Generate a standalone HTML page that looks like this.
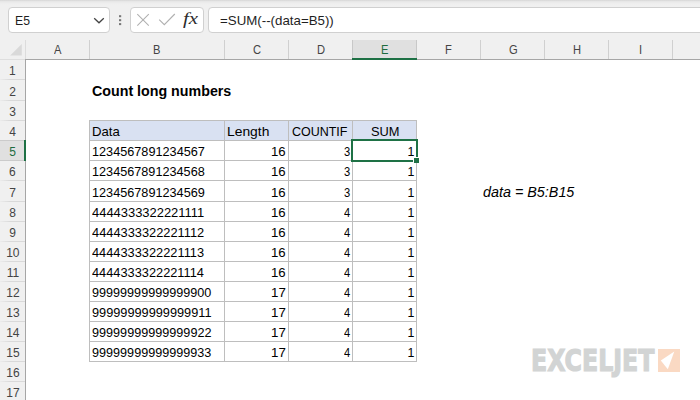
<!DOCTYPE html>
<html lang="en"><head><meta charset="utf-8"><title>Count long numbers</title>
<style>
html,body{margin:0;padding:0}
body{width:700px;height:400px;position:relative;overflow:hidden;background:#fff;font-family:"Liberation Sans", sans-serif}
.abs,.t,.chs,.rhs,.tl{position:absolute}
.t{white-space:pre;line-height:20px;transform-origin:0 0;display:block}
.f-sans{font-family:"Liberation Sans", sans-serif}
.f-serif{font-family:"Liberation Serif", serif}
.f-dejavu{font-family:"DejaVu Sans", "Liberation Sans", sans-serif;-webkit-text-stroke:1.2px #d2d4d4}
#top{left:0;top:0;width:700px;height:60px;background:#f0f0f0}
#topgrad{left:0;top:0;width:700px;height:5px;background:linear-gradient(#d6d6d6,#e7e7e7 30%,#eeeeee 65%,#f0f0f0)}
.box{background:#fff;border:1px solid #d0d0d0;border-radius:4px;box-sizing:border-box}
#namebox{left:8px;top:7px;width:102px;height:26px}
#fxbox{left:130px;top:7px;width:74px;height:26px}
#fbar{left:208px;top:7px;width:500px;height:26px}
#rowhdr{left:0;top:60px;width:25px;height:340px;background:#f0f0f0}
#rowline{left:25px;top:59px;width:1px;height:341px;background:#a6a6a6}
#hdrline{left:26px;top:59px;width:674px;height:1px;background:#a6a6a6}
#hdrline0{left:0;top:59px;width:25px;height:1px;background:#dedede}
#cornerline{left:25px;top:40px;width:1px;height:19px;background:#dcdcdc}
.chs{top:40px;width:1px;height:19px;background:#d0d0d0}
.rhs{left:0;width:25px;height:1px;background:linear-gradient(90deg,#ececec,#d9d9d9 40%)}
.rsel{background:#cbcbcb}
.csel{background:#c8c8c8}
#selcol{left:352px;top:40px;width:64px;height:18px;background:#e0e0e0}
#selcolb{left:352px;top:58px;width:65px;height:2px;background:#1e7145}
#selrow{left:0;top:141px;width:24px;height:19px;background:#e0e0e0}
#selrowb{left:24px;top:140px;width:2px;height:21px;background:#1e7145}
.tl{background:#bebebe}
#thead{left:90px;top:121px;width:326px;height:19px;background:#d9e1f2}
#sel{left:351px;top:139px;width:63px;height:19px;border:2px solid #1e7145}
#handle{left:413px;top:157px;width:5px;height:5px;background:#1e7145;border:1px solid #fff;border-bottom:0;border-right:0}
#logoicon{left:658px;top:349px;width:22px;height:23px;background:#fad9c3}
svg{position:absolute;overflow:visible}
</style></head><body>
<div id="top" class="abs"></div><div id="topgrad" class="abs"></div>
<div id="namebox" class="abs box"></div>
<div id="fxbox" class="abs box"></div>
<div id="fbar" class="abs box"></div>
<svg style="left:0;top:0" width="700" height="40" viewBox="0 0 700 40">
<polyline points="94.2,18.2 99,22.8 103.8,18.2" fill="none" stroke="#444" stroke-width="1.3"/>
<rect x="119" y="15.2" width="2.2" height="2" fill="#777"/><rect x="119" y="19.2" width="2.2" height="2" fill="#777"/><rect x="119" y="23.1" width="2.2" height="2" fill="#777"/>
<path d="M137.3 14.2 L148.8 25.6 M148.8 14.2 L137.3 25.6" stroke="#b0b0b0" stroke-width="1.1" fill="none"/>
<path d="M159.2 19.6 L164.3 24.6 L174.8 14" stroke="#b0b0b0" stroke-width="1.1" fill="none"/>
</svg>
<div id="selcol" class="abs"></div>
<div id="rowhdr" class="abs"></div>
<div id="selrow" class="abs"></div>
<div id="hdrline0" class="abs"></div><div id="hdrline" class="abs"></div><div id="cornerline" class="abs"></div>
<div id="rowline" class="abs"></div>
<svg style="left:0;top:40px" width="26" height="20" viewBox="0 40 26 20"><polygon points="21.8,44 21.8,55.6 10.2,55.6" fill="#d9d9d9"/></svg>
<div id="thead" class="abs"></div>
<div class="chs" style="left:89px"></div><div class="chs" style="left:224px"></div><div class="chs" style="left:288px"></div><div class="chs csel" style="left:352px"></div><div class="chs csel" style="left:416px"></div><div class="chs" style="left:480px"></div><div class="chs" style="left:544px"></div><div class="chs" style="left:608px"></div><div class="chs" style="left:672px"></div><div class="rhs" style="top:79px"></div><div class="rhs" style="top:100px"></div><div class="rhs" style="top:120px"></div><div class="rhs rsel" style="top:140px"></div><div class="rhs rsel" style="top:160px"></div><div class="rhs" style="top:180px"></div><div class="rhs" style="top:201px"></div><div class="rhs" style="top:221px"></div><div class="rhs" style="top:241px"></div><div class="rhs" style="top:261px"></div><div class="rhs" style="top:281px"></div><div class="rhs" style="top:301px"></div><div class="rhs" style="top:321px"></div><div class="rhs" style="top:341px"></div><div class="rhs" style="top:361px"></div><div class="rhs" style="top:381px"></div><div class="tl" style="left:89px;top:120px;width:328px;height:1px"></div><div class="tl" style="left:89px;top:140px;width:328px;height:1px"></div><div class="tl" style="left:89px;top:160px;width:328px;height:1px"></div><div class="tl" style="left:89px;top:180px;width:328px;height:1px"></div><div class="tl" style="left:89px;top:201px;width:328px;height:1px"></div><div class="tl" style="left:89px;top:221px;width:328px;height:1px"></div><div class="tl" style="left:89px;top:241px;width:328px;height:1px"></div><div class="tl" style="left:89px;top:261px;width:328px;height:1px"></div><div class="tl" style="left:89px;top:281px;width:328px;height:1px"></div><div class="tl" style="left:89px;top:301px;width:328px;height:1px"></div><div class="tl" style="left:89px;top:321px;width:328px;height:1px"></div><div class="tl" style="left:89px;top:341px;width:328px;height:1px"></div><div class="tl" style="left:89px;top:361px;width:328px;height:1px"></div><div class="tl" style="left:89px;top:120px;width:1px;height:242px"></div><div class="tl" style="left:224px;top:120px;width:1px;height:242px"></div><div class="tl" style="left:288px;top:120px;width:1px;height:242px"></div><div class="tl" style="left:352px;top:120px;width:1px;height:242px"></div><div class="tl" style="left:416px;top:120px;width:1px;height:242px"></div>
<div id="selcolb" class="abs"></div><div id="selrowb" class="abs"></div>
<div id="sel" class="abs"></div><div id="handle" class="abs"></div>
<div id="logoicon" class="abs"></div>
<svg style="left:0;top:0" width="700" height="400" viewBox="0 0 700 400"><polygon points="674.3,351.5 660.8,360.5 667.8,369.2" fill="#fff"/></svg>
<span class="t f-sans" style="left:14.53px;top:11.00px;font-size:12.6px;transform:scaleX(0.9709);color:#1f1f1f;">E5</span>
<span class="t f-sans" style="left:219.98px;top:11.00px;font-size:12.8px;transform:scaleX(1.0391);color:#1f1f1f;">=SUM(--(data=B5))</span>
<span class="t f-serif" style="left:183.40px;top:9.00px;font-size:17px;transform:scaleX(1.2253);color:#2b2b2b;font-style:italic;">fx</span>
<span class="t f-sans" style="left:54.08px;top:40.00px;font-size:12px;transform:scaleX(0.9300);color:#444;">A</span>
<span class="t f-sans" style="left:153.42px;top:40.00px;font-size:12px;transform:scaleX(0.9300);color:#444;">B</span>
<span class="t f-sans" style="left:252.68px;top:40.00px;font-size:12px;transform:scaleX(0.9300);color:#444;">C</span>
<span class="t f-sans" style="left:316.59px;top:40.00px;font-size:12px;transform:scaleX(0.9300);color:#444;">D</span>
<span class="t f-sans" style="left:380.87px;top:40.00px;font-size:12px;transform:scaleX(0.9300);color:#1d6b3f;">E</span>
<span class="t f-sans" style="left:445.17px;top:40.00px;font-size:12px;transform:scaleX(0.9300);color:#444;">F</span>
<span class="t f-sans" style="left:508.59px;top:40.00px;font-size:12px;transform:scaleX(0.9300);color:#444;">G</span>
<span class="t f-sans" style="left:572.78px;top:40.00px;font-size:12px;transform:scaleX(0.9300);color:#444;">H</span>
<span class="t f-sans" style="left:639.24px;top:40.00px;font-size:12px;transform:scaleX(0.9300);color:#444;">I</span>
<span class="t f-sans" style="left:9.00px;top:61.00px;font-size:12px;transform:scaleX(1.0000);color:#444;">1</span>
<span class="t f-sans" style="left:9.15px;top:82.00px;font-size:12px;transform:scaleX(1.0000);color:#444;">2</span>
<span class="t f-sans" style="left:9.20px;top:102.00px;font-size:12px;transform:scaleX(1.0000);color:#444;">3</span>
<span class="t f-sans" style="left:9.20px;top:122.00px;font-size:12px;transform:scaleX(1.0000);color:#444;">4</span>
<span class="t f-sans" style="left:9.18px;top:142.00px;font-size:12px;transform:scaleX(1.0000);color:#1d6b3f;">5</span>
<span class="t f-sans" style="left:9.12px;top:162.00px;font-size:12px;transform:scaleX(1.0000);color:#444;">6</span>
<span class="t f-sans" style="left:9.15px;top:183.00px;font-size:12px;transform:scaleX(1.0000);color:#444;">7</span>
<span class="t f-sans" style="left:9.15px;top:203.00px;font-size:12px;transform:scaleX(1.0000);color:#444;">8</span>
<span class="t f-sans" style="left:9.15px;top:223.00px;font-size:12px;transform:scaleX(1.0000);color:#444;">9</span>
<span class="t f-sans" style="left:6.19px;top:243.00px;font-size:12px;transform:scaleX(1.0000);color:#444;">10</span>
<span class="t f-sans" style="left:6.71px;top:263.00px;font-size:12px;transform:scaleX(1.0000);color:#444;">11</span>
<span class="t f-sans" style="left:6.26px;top:283.00px;font-size:12px;transform:scaleX(1.0000);color:#444;">12</span>
<span class="t f-sans" style="left:6.24px;top:303.00px;font-size:12px;transform:scaleX(1.0000);color:#444;">13</span>
<span class="t f-sans" style="left:6.14px;top:323.00px;font-size:12px;transform:scaleX(1.0000);color:#444;">14</span>
<span class="t f-sans" style="left:6.21px;top:343.00px;font-size:12px;transform:scaleX(1.0000);color:#444;">15</span>
<span class="t f-sans" style="left:6.24px;top:363.00px;font-size:12px;transform:scaleX(1.0000);color:#444;">16</span>
<span class="t f-sans" style="left:6.26px;top:383.00px;font-size:12px;transform:scaleX(1.0000);color:#444;">17</span>
<span class="t f-sans" style="left:91.85px;top:82.00px;font-size:13.8px;transform:scaleX(1.0326);color:#000;font-weight:bold;">Count long numbers</span>
<span class="t f-sans" style="left:91.57px;top:122.00px;font-size:12.1px;transform:scaleX(1.0881);color:#000;">Data</span>
<span class="t f-sans" style="left:226.51px;top:122.00px;font-size:12.1px;transform:scaleX(1.1451);color:#000;">Length</span>
<span class="t f-sans" style="left:292.38px;top:122.00px;font-size:12.1px;transform:scaleX(1.0317);color:#000;">COUNTIF</span>
<span class="t f-sans" style="left:370.67px;top:122.00px;font-size:12.1px;transform:scaleX(1.0626);color:#000;">SUM</span>
<span class="t f-sans" style="left:91.68px;top:142.00px;font-size:12.4px;transform:scaleX(1.0235);color:#000;">1234567891234567</span>
<span class="t f-sans" style="left:271.44px;top:142.00px;font-size:12.4px;transform:scaleX(1.0648);color:#000;">16</span>
<span class="t f-sans" style="left:343.84px;top:142.00px;font-size:12.4px;transform:scaleX(0.9000);color:#000;">3</span>
<span class="t f-sans" style="left:407.60px;top:142.00px;font-size:12.4px;transform:scaleX(1.0000);color:#000;">1</span>
<span class="t f-sans" style="left:91.68px;top:162.00px;font-size:12.4px;transform:scaleX(1.0225);color:#000;">1234567891234568</span>
<span class="t f-sans" style="left:271.44px;top:162.00px;font-size:12.4px;transform:scaleX(1.0648);color:#000;">16</span>
<span class="t f-sans" style="left:343.84px;top:162.00px;font-size:12.4px;transform:scaleX(0.9000);color:#000;">3</span>
<span class="t f-sans" style="left:407.60px;top:162.00px;font-size:12.4px;transform:scaleX(1.0000);color:#000;">1</span>
<span class="t f-sans" style="left:91.68px;top:183.00px;font-size:12.4px;transform:scaleX(1.0230);color:#000;">1234567891234569</span>
<span class="t f-sans" style="left:271.44px;top:183.00px;font-size:12.4px;transform:scaleX(1.0648);color:#000;">16</span>
<span class="t f-sans" style="left:343.84px;top:183.00px;font-size:12.4px;transform:scaleX(0.9000);color:#000;">3</span>
<span class="t f-sans" style="left:407.60px;top:183.00px;font-size:12.4px;transform:scaleX(1.0000);color:#000;">1</span>
<span class="t f-sans" style="left:92.34px;top:203.00px;font-size:12.4px;transform:scaleX(1.0437);color:#000;">4444333322221111</span>
<span class="t f-sans" style="left:271.44px;top:203.00px;font-size:12.4px;transform:scaleX(1.0648);color:#000;">16</span>
<span class="t f-sans" style="left:343.71px;top:203.00px;font-size:12.4px;transform:scaleX(0.9000);color:#000;">4</span>
<span class="t f-sans" style="left:407.60px;top:203.00px;font-size:12.4px;transform:scaleX(1.0000);color:#000;">1</span>
<span class="t f-sans" style="left:92.34px;top:223.00px;font-size:12.4px;transform:scaleX(1.0348);color:#000;">4444333322221112</span>
<span class="t f-sans" style="left:271.44px;top:223.00px;font-size:12.4px;transform:scaleX(1.0648);color:#000;">16</span>
<span class="t f-sans" style="left:343.71px;top:223.00px;font-size:12.4px;transform:scaleX(0.9000);color:#000;">4</span>
<span class="t f-sans" style="left:407.60px;top:223.00px;font-size:12.4px;transform:scaleX(1.0000);color:#000;">1</span>
<span class="t f-sans" style="left:92.34px;top:243.00px;font-size:12.4px;transform:scaleX(1.0338);color:#000;">4444333322221113</span>
<span class="t f-sans" style="left:271.44px;top:243.00px;font-size:12.4px;transform:scaleX(1.0648);color:#000;">16</span>
<span class="t f-sans" style="left:343.71px;top:243.00px;font-size:12.4px;transform:scaleX(0.9000);color:#000;">4</span>
<span class="t f-sans" style="left:407.60px;top:243.00px;font-size:12.4px;transform:scaleX(1.0000);color:#000;">1</span>
<span class="t f-sans" style="left:92.34px;top:263.00px;font-size:12.4px;transform:scaleX(1.0324);color:#000;">4444333322221114</span>
<span class="t f-sans" style="left:271.44px;top:263.00px;font-size:12.4px;transform:scaleX(1.0648);color:#000;">16</span>
<span class="t f-sans" style="left:343.71px;top:263.00px;font-size:12.4px;transform:scaleX(0.9000);color:#000;">4</span>
<span class="t f-sans" style="left:407.60px;top:263.00px;font-size:12.4px;transform:scaleX(1.0000);color:#000;">1</span>
<span class="t f-sans" style="left:92.04px;top:283.00px;font-size:12.4px;transform:scaleX(1.0186);color:#000;">99999999999999900</span>
<span class="t f-sans" style="left:271.43px;top:283.00px;font-size:12.4px;transform:scaleX(1.0735);color:#000;">17</span>
<span class="t f-sans" style="left:343.71px;top:283.00px;font-size:12.4px;transform:scaleX(0.9000);color:#000;">4</span>
<span class="t f-sans" style="left:407.60px;top:283.00px;font-size:12.4px;transform:scaleX(1.0000);color:#000;">1</span>
<span class="t f-sans" style="left:92.03px;top:303.00px;font-size:12.4px;transform:scaleX(1.0280);color:#000;">99999999999999911</span>
<span class="t f-sans" style="left:271.43px;top:303.00px;font-size:12.4px;transform:scaleX(1.0735);color:#000;">17</span>
<span class="t f-sans" style="left:343.71px;top:303.00px;font-size:12.4px;transform:scaleX(0.9000);color:#000;">4</span>
<span class="t f-sans" style="left:407.60px;top:303.00px;font-size:12.4px;transform:scaleX(1.0000);color:#000;">1</span>
<span class="t f-sans" style="left:92.04px;top:323.00px;font-size:12.4px;transform:scaleX(1.0199);color:#000;">99999999999999922</span>
<span class="t f-sans" style="left:271.43px;top:323.00px;font-size:12.4px;transform:scaleX(1.0735);color:#000;">17</span>
<span class="t f-sans" style="left:343.71px;top:323.00px;font-size:12.4px;transform:scaleX(0.9000);color:#000;">4</span>
<span class="t f-sans" style="left:407.60px;top:323.00px;font-size:12.4px;transform:scaleX(1.0000);color:#000;">1</span>
<span class="t f-sans" style="left:92.04px;top:343.00px;font-size:12.4px;transform:scaleX(1.0190);color:#000;">99999999999999933</span>
<span class="t f-sans" style="left:271.43px;top:343.00px;font-size:12.4px;transform:scaleX(1.0735);color:#000;">17</span>
<span class="t f-sans" style="left:343.71px;top:343.00px;font-size:12.4px;transform:scaleX(0.9000);color:#000;">4</span>
<span class="t f-sans" style="left:407.60px;top:343.00px;font-size:12.4px;transform:scaleX(1.0000);color:#000;">1</span>
<span class="t f-sans" style="left:482.55px;top:183.00px;font-size:13.8px;transform:scaleX(1.0399);color:#000;font-style:italic;">data = B5:B15</span>
<span class="t f-dejavu" style="left:530.75px;top:351.00px;font-size:29.4px;transform:scaleX(0.8058);color:#d2d4d4;font-weight:bold;">EXCELJET</span>
</body></html>
